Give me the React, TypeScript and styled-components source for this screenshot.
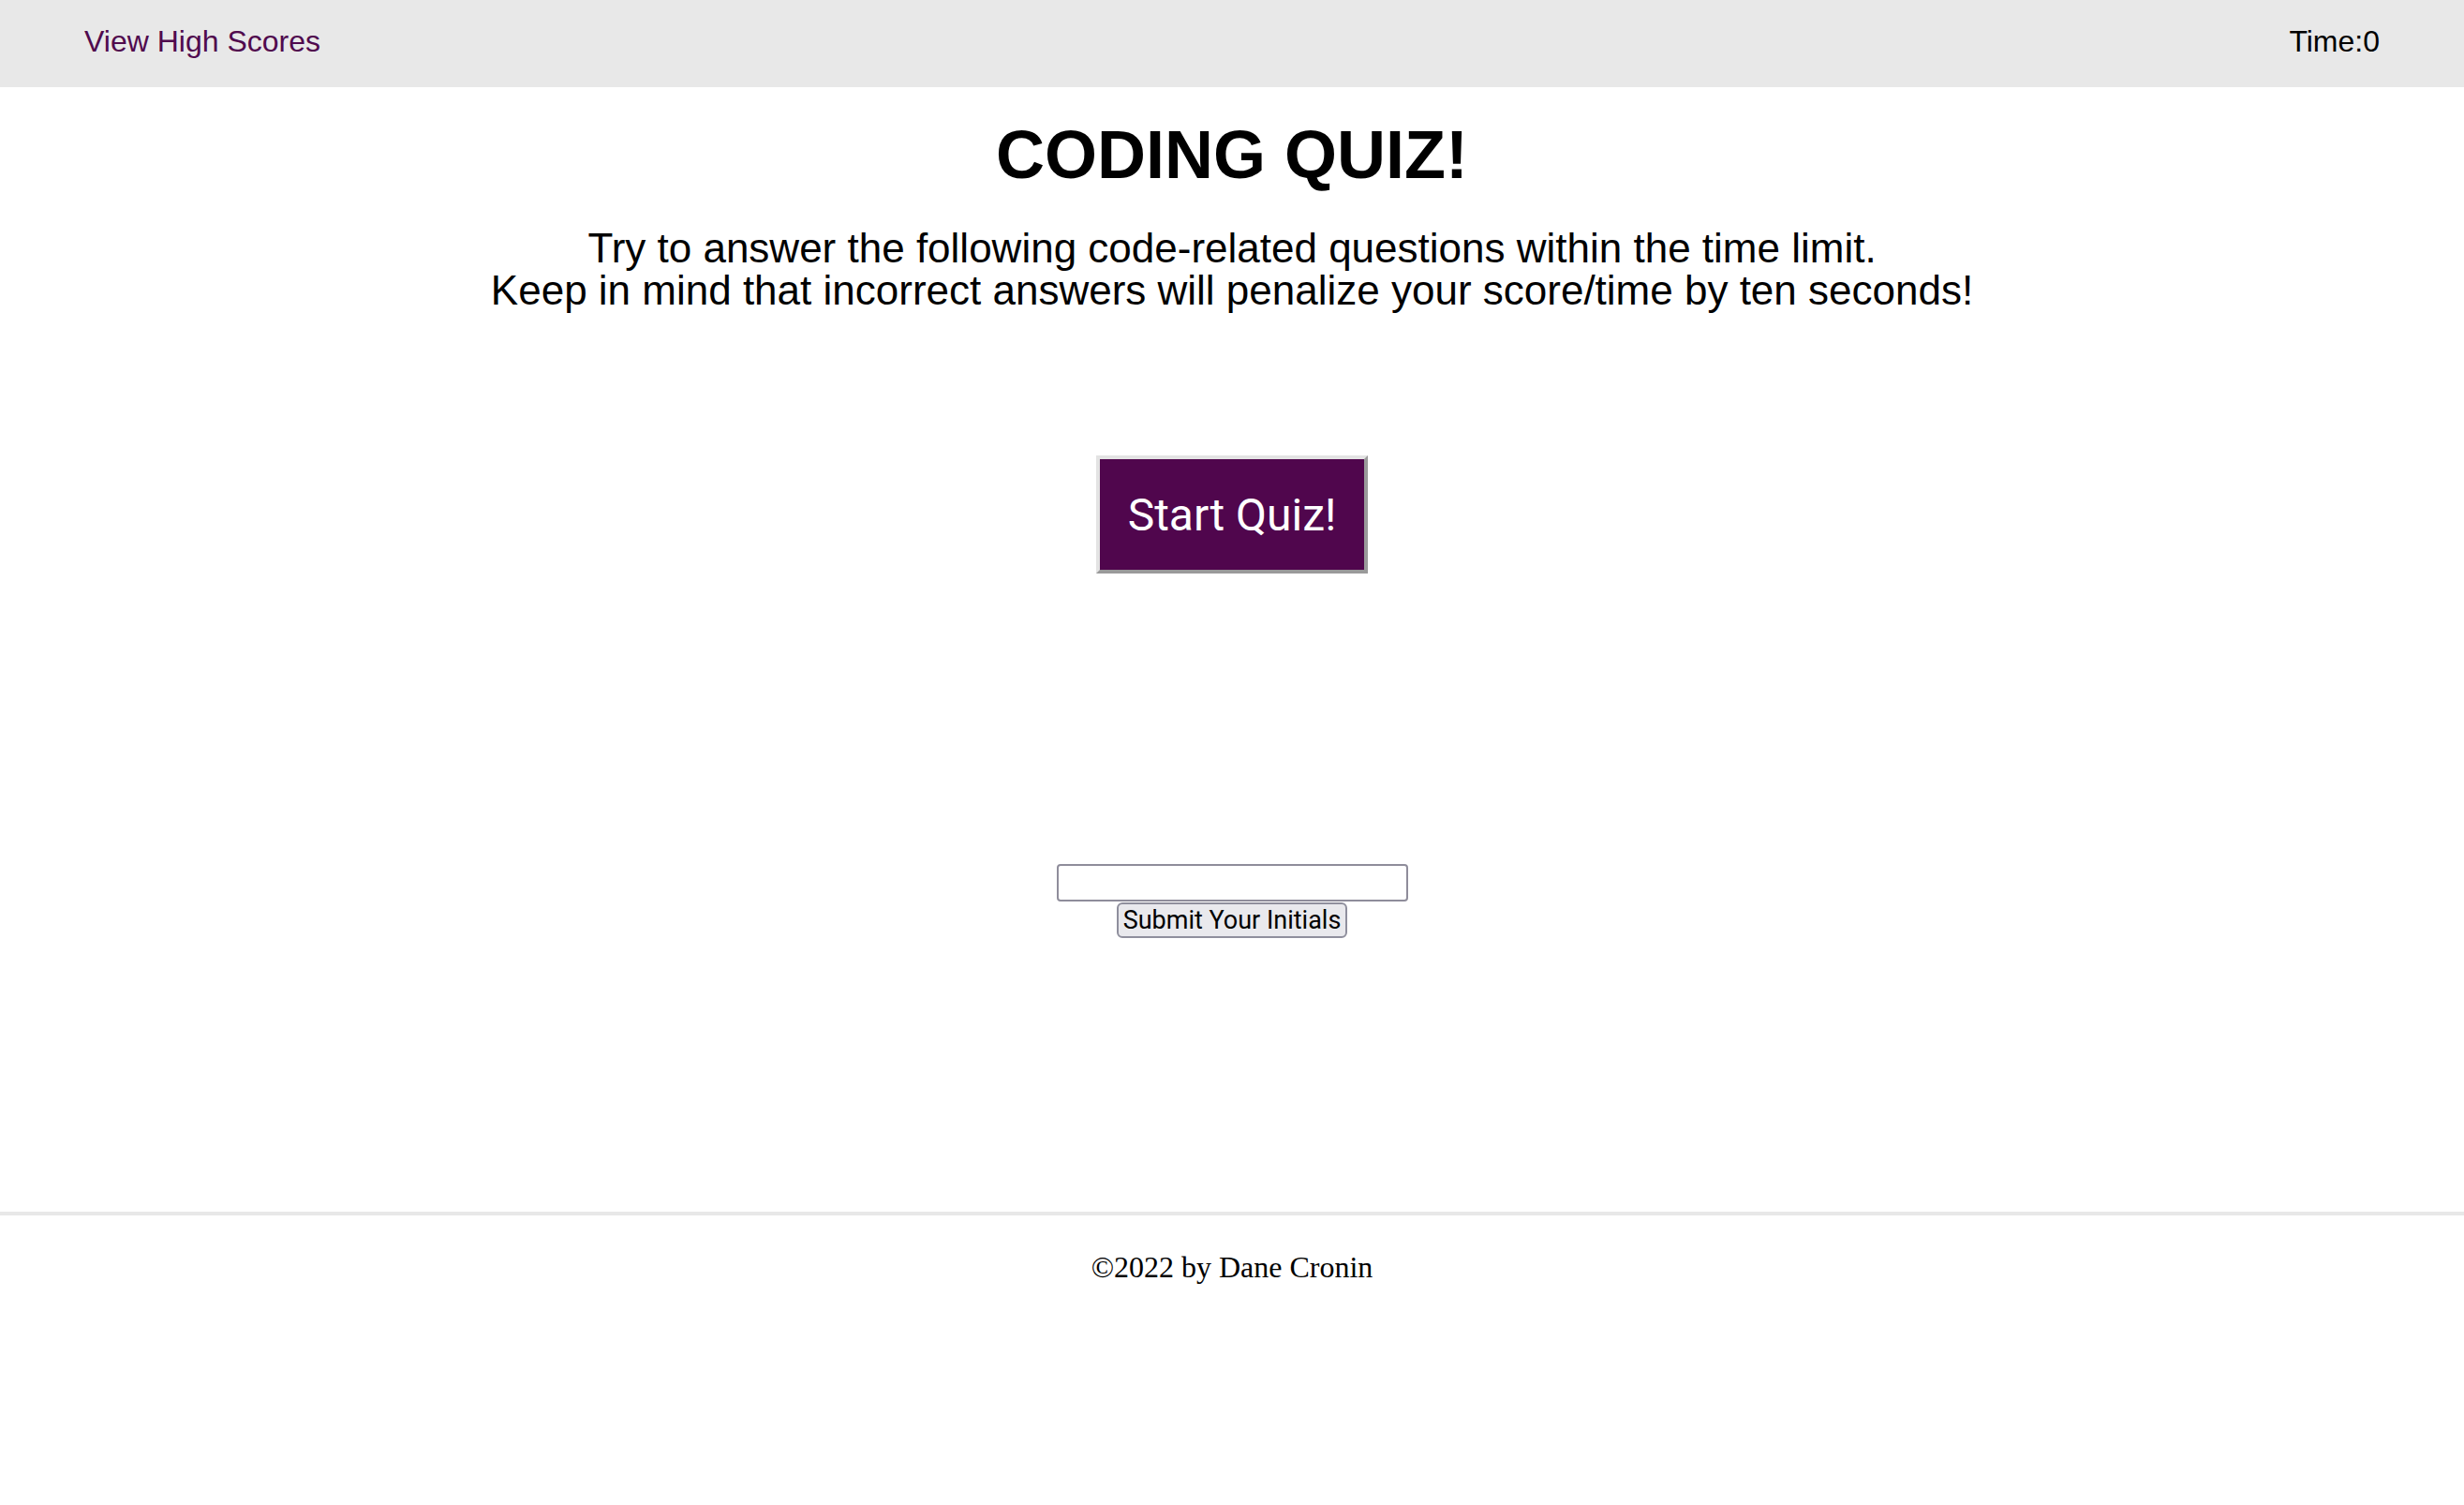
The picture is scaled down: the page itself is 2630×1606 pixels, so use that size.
import React, { useState } from 'react';
import styled, { createGlobalStyle } from 'styled-components';

const GlobalStyle = createGlobalStyle`
  html, body {
    margin: 0;
    padding: 0;
    background: #ffffff;
  }

  body {
    font-family: "Liberation Sans", Arial, Helvetica, sans-serif;
    color: #000000;
  }
`;

const Page = styled.div`
  display: flex;
  flex-direction: column;
  min-height: 1606px;
`;

const TopBar = styled.header`
  display: flex;
  justify-content: space-between;
  align-items: flex-start;
  box-sizing: border-box;
  height: 93px;
  padding: 28px 90px 0;
  background-color: #e8e8e8;
  font-size: 32px;
  line-height: 1;
`;

const ScoresLink = styled.a`
  color: #500a4e;
  text-decoration: none;
  cursor: pointer;
`;

const Timer = styled.div`
  color: #000000;
`;

const QuizSection = styled.main`
  display: flex;
  flex-direction: column;
  align-items: center;
  text-align: center;
`;

const Title = styled.h1`
  margin: 36px 0 0;
  font-size: 72px;
  font-weight: 700;
  line-height: 1;
`;

const Intro = styled.p`
  margin: 41px 0 0;
  font-size: 44px;
  line-height: 45px;
`;

const StartButton = styled.button`
  margin-top: 154px;
  padding: 32px 30px 30px;
  background-color: #50064d;
  color: #ffffff;
  font-family: Roboto, "Noto Sans", sans-serif;
  font-size: 48px;
  line-height: 56px;
  border-width: 4px;
  border-style: solid;
  border-color: #e3e3e3 #9a9a9a #9a9a9a #e3e3e3;
  cursor: pointer;
`;

const InitialsForm = styled.form`
  display: flex;
  flex-direction: column;
  align-items: center;
  margin-top: 310px;
`;

const InitialsInput = styled.input`
  box-sizing: border-box;
  width: 375px;
  height: 40px;
  padding: 0 6px;
  border: 2px solid #8f8d9b;
  border-radius: 4px;
  background: #ffffff;
  font-family: Roboto, sans-serif;
  font-size: 26px;
  outline: none;
`;

const SubmitButton = styled.button`
  margin-top: 1px;
  padding: 4px 5px 3px;
  background-color: #e9e9ed;
  border: 2px solid #8f8f9d;
  border-radius: 6px;
  color: #000000;
  font-family: Roboto, "Noto Sans", sans-serif;
  font-size: 27px;
  line-height: 1;
  cursor: pointer;
`;

const Footer = styled.footer`
  margin-top: 292px;
  padding-top: 39px;
  border-top: 4px solid #e8e8e8;
  text-align: center;
  font-family: "Liberation Serif", "Times New Roman", serif;
  font-size: 32px;
  line-height: 1;
`;

const App: React.FC = () => {
  const [initials, setInitials] = useState('');
  const [time] = useState(0);

  return (
    <>
      <GlobalStyle />
      <Page>
        <TopBar>
          <ScoresLink>View High Scores</ScoresLink>
          <Timer>Time:{time}</Timer>
        </TopBar>

        <QuizSection>
          <Title>CODING QUIZ!</Title>
          <Intro>
            Try to answer the following code-related questions within the time limit.
            <br />
            Keep in mind that incorrect answers will penalize your score/time by ten seconds!
          </Intro>
          <StartButton type="button">Start Quiz!</StartButton>

          <InitialsForm onSubmit={(e) => e.preventDefault()}>
            <InitialsInput
              type="text"
              value={initials}
              onChange={(e) => setInitials(e.target.value)}
            />
            <SubmitButton type="submit">Submit Your Initials</SubmitButton>
          </InitialsForm>
        </QuizSection>

        <Footer>©2022 by Dane Cronin</Footer>
      </Page>
    </>
  );
};

export default App;
